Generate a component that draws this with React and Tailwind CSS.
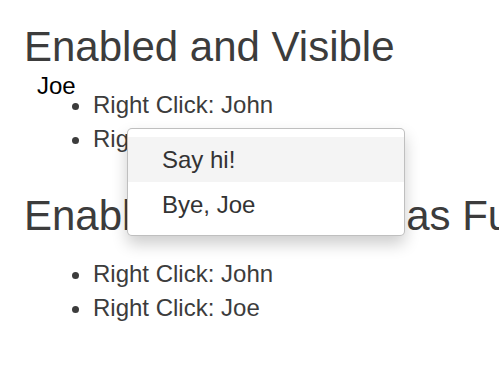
const items = ['John', 'Joe'];

function Section({ title, first }) {
  return (
    <section>
      <h2
        className={`text-[42px] leading-[46px] font-normal whitespace-nowrap mb-[18px] ${
          first ? 'mt-6' : 'mt-[37px]'
        }`}
      >
        {title}
      </h2>
      <ul className="list-disc pl-[69px]">
        {items.map(name => (
          <li key={name} className="leading-[34px]">
            Right Click: {name}
          </li>
        ))}
      </ul>
    </section>
  );
}

export default function App() {
  return (
    <div
      className="relative h-screen overflow-hidden bg-white px-6 text-[24px] text-[#3c3c3c]"
      style={{ fontFamily: '"Liberation Sans", Arial, sans-serif' }}
    >
      <Section title="Enabled and Visible" first />
      <Section title="Enabled and Visible as Function" />

      {/* drag label */}
      <div className="absolute left-[37px] top-[74px] leading-6 text-black">Joe</div>

      {/* context menu */}
      <div className="absolute left-[127px] top-[128px] w-[278px] rounded-[5px] border border-black/25 bg-white py-2 text-[#333] shadow-[0_8px_16px_rgba(0,0,0,0.2)]">
        <div className="h-[45px] flex items-center pl-[34px] bg-[#f4f4f4]">Say hi!</div>
        <div className="h-[45px] flex items-center pl-[34px]">Bye, Joe</div>
      </div>
    </div>
  );
}
